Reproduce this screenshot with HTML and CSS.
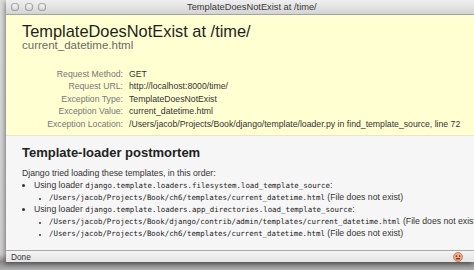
FILE: index.html
```html
<!DOCTYPE html>
<html lang="en">
<head>
    <title>TemplateDoesNotExist at /time/</title>
    <link rel="stylesheet" href="styles.css">
</head>
<body>
    <div class="window">
        <div class="titlebar">
            <div class="lights">
                <span class="light"></span>
                <span class="light"></span>
                <span class="light"></span>
            </div>
            <div class="title">TemplateDoesNotExist at /time/</div>
        </div>

        <div class="page">
            <div id="summary">
                <h1>TemplateDoesNotExist at /time/</h1>
                <h2>current_datetime.html</h2>
                <table class="meta">
                    <tr><th>Request Method:</th><td>GET</td></tr>
                    <tr><th>Request URL:</th><td>http://localhost:8000/time/</td></tr>
                    <tr><th>Exception Type:</th><td>TemplateDoesNotExist</td></tr>
                    <tr><th>Exception Value:</th><td>current_datetime.html</td></tr>
                    <tr><th>Exception Location:</th><td>/Users/jacob/Projects/Book/django/template/loader.py in find_template_source, line 72</td></tr>
                </table>
            </div>

            <div id="template-not-exist">
                <h2>Template-loader postmortem</h2>
                <p>Django tried loading these templates, in this order:</p>
                <ul>
                    <li>Using loader <code>django.template.loaders.filesystem.load_template_source</code>:
                        <ul>
                            <li><code>/Users/jacob/Projects/Book/ch6/templates/current_datetime.html</code> (File does not exist)</li>
                        </ul>
                    </li>
                    <li>Using loader <code>django.template.loaders.app_directories.load_template_source</code>:
                        <ul>
                            <li><code>/Users/jacob/Projects/Book/django/contrib/admin/templates/current_datetime.html</code> (File does not exist)</li>
                            <li><code>/Users/jacob/Projects/Book/ch6/templates/current_datetime.html</code> (File does not exist)</li>
                        </ul>
                    </li>
                </ul>
            </div>
        </div>

        <div class="statusbar">
            <span>Done</span>
            <svg class="status-icon" width="10" height="10" viewBox="0 0 10 10">
                <circle cx="5" cy="5" r="4.5" fill="#eeb08c" stroke="#c46a4c" stroke-width="0.8"/>
                <circle cx="3.4" cy="4.1" r="0.85" fill="#7a3424"/>
                <circle cx="6.6" cy="4.1" r="0.85" fill="#7a3424"/>
                <rect x="2.8" y="6.1" width="4.4" height="1.3" rx="0.5" fill="#7a3424"/>
            </svg>
        </div>
    </div>
</body>
</html>
```

FILE: styles.css
```css
html, body {
    margin: 0;
    height: 270px;
    overflow: hidden;
}
body {
    font-family: 'Liberation Sans', Arial, sans-serif;
    background: linear-gradient(180deg, #dcdcdc 0%, #cfcfcf 94%, #8a8a8a 97%, #b0b0b0 100%);
    padding-left: 6px;
}
.window {
    width: 468px;
    height: 262px;
    background: #f6f6f6;
    display: flex;
    flex-direction: column;
    box-shadow: -1px 2px 5px rgba(0,0,0,0.45);
}
.titlebar {
    height: 14px;
    flex: none;
    background: linear-gradient(180deg, #efefef 0%, #e3e3e3 50%, #d3d3d3 100%);
    border-bottom: 1px solid #a4a4a4;
    display: flex;
    align-items: center;
    font-size: 9.3px;
    color: #3a3a3a;
}
.lights {
    display: flex;
    gap: 5.5px;
    padding-left: 5px;
}
.light {
    width: 8px;
    height: 8px;
    border-radius: 50%;
    background: radial-gradient(circle at 50% 35%, #f6f6f6 0%, #cdcdcd 65%, #a9a9a9 100%);
    box-shadow: inset 0 0 0 0.6px #8c8c8c;
}
.title {
    margin-left: 141px;
}
.page {
    flex: 1;
    display: flex;
    flex-direction: column;
}
#summary {
    background: #ffffd2;
    height: 120px;
    flex: none;
    padding-left: 16px;
    border-bottom: 1px solid #e6e6cf;
    overflow: hidden;
}
#summary h1 {
    font-weight: normal;
    font-size: 16.4px;
    line-height: 16px;
    margin: 8px 0 0 0;
    color: #1e1e1e;
}
#summary h2 {
    font-weight: normal;
    font-size: 11.5px;
    line-height: 12px;
    color: #6a6a6a;
    margin: 0;
}
table.meta {
    border-collapse: collapse;
    margin-top: 17px;
    font-size: 8.7px;
    line-height: 12.4px;
}
table.meta th {
    color: #777;
    font-weight: normal;
    text-align: right;
    padding: 0 6px 0 0;
    width: 101px;
    white-space: nowrap;
}
table.meta td {
    color: #333;
    padding: 0;
    white-space: nowrap;
}
#template-not-exist {
    flex: 1;
    padding: 10px 0 0 16px;
    font-size: 8.7px;
    color: #333;
    overflow: hidden;
}
#template-not-exist h2 {
    font-size: 13px;
    line-height: 14px;
    margin: 0 0 7px 0;
    color: #222;
}
#template-not-exist p {
    margin: 0;
    line-height: 12px;
    white-space: nowrap;
}
#template-not-exist ul {
    margin: 0;
    padding-left: 12px;
    line-height: 12px;
    white-space: nowrap;
}
#template-not-exist ul ul {
    padding-left: 15px;
    list-style: disc;
}
#template-not-exist ul ul li::marker {
    font-size: 6px;
}
code {
    font-family: 'DejaVu Sans Mono', monospace;
    font-size: 7.4px;
    line-height: 1;
    color: #222;
}
.statusbar {
    height: 11px;
    flex: none;
    border-top: 1px solid #a9a9a9;
    background: linear-gradient(180deg, #f4f4f4 0%, #e4e4e4 100%);
    display: flex;
    align-items: center;
    justify-content: space-between;
    padding: 0 11px 0 5px;
    font-size: 8.3px;
    color: #333;
}
.status-icon {
    display: block;
}
```
